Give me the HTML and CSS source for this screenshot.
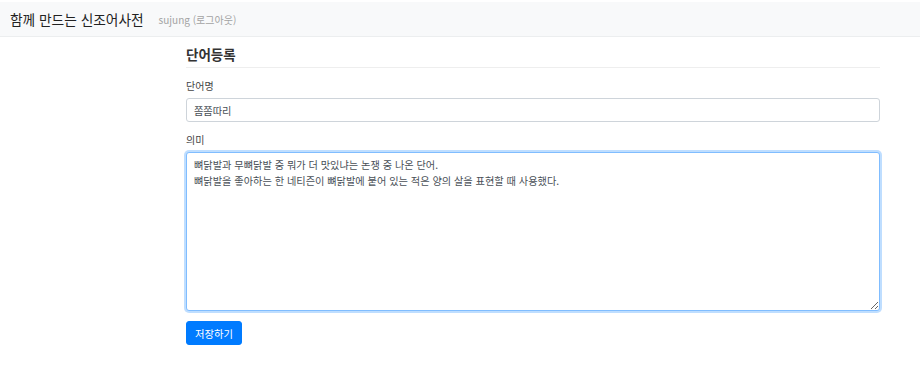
FILE: index.html
```html
<!DOCTYPE html>
<html lang="ko">
<head>
  <meta charset="UTF-8" />
  <meta name="viewport" content="width=device-width, initial-scale=1.0"/>
  <title>함께 만드는 신조어사전</title>
  <link rel="stylesheet" href="styles.css">
</head>
<body>

  <nav class="navbar">
    <span class="brand">함께 만드는 신조어사전</span>
    <span class="user">sujung (로그아웃)</span>
  </nav>

  <main class="content">
    <h5 class="title">단어등록</h5>
    <form class="word-form">
      <div class="form-group">
        <label for="word">단어명</label>
        <input type="text" id="word" class="form-control" value="쫌쫌따리">
      </div>
      <div class="form-group">
        <label for="meaning">의미</label>
        <textarea id="meaning" class="form-control focused">뼈닭발과 무뼈닭발 중 뭐가 더 맛있냐는 논쟁 중 나온 단어.
뼈닭발을 좋아하는 한 네티즌이 뼈닭발에 붙어 있는 적은 양의 살을 표현할 때 사용했다.</textarea>
      </div>
      <button type="button" class="btn-save">저장하기</button>
    </form>
  </main>

</body>
</html>
```

FILE: styles.css
```css
body {
  margin: 0;
  padding: 0;
  background: #fff;
  font-family: "Noto Sans CJK KR", "Noto Sans", sans-serif;
  font-size: 10px;
  line-height: 15px;
  color: #212529;
}

.navbar {
  margin-top: 2px;
  height: 34px;
  background: #f8f9fa;
  border-bottom: 1px solid #eceeef;
  display: flex;
  align-items: center;
  padding: 0 10px;
  gap: 15px;
}

.brand {
  font-size: 13.7px;
  color: #222;
}

.user {
  font-size: 10px;
  color: #a3a3a3;
}

.content {
  margin: 0 40px 0 186px;
}

.title {
  margin: 10px 0 10px;
  padding-bottom: 5px;
  font-size: 13.5px;
  line-height: 15px;
  font-weight: bold;
  color: #333;
  border-bottom: 1px solid #eee;
}

.form-group {
  margin-bottom: 10px;
}

.form-group label {
  display: block;
  margin-bottom: 5px;
  color: #444;
}

.form-control {
  display: block;
  box-sizing: border-box;
  width: 100%;
  margin: 0;
  padding: 4px 7px;
  font-family: inherit;
  font-size: 10.2px;
  line-height: 15px;
  color: #495057;
  background: #fff;
  border: 1px solid #ced4da;
  border-radius: 3px;
}

input.form-control {
  height: 24px;
}

textarea.form-control {
  height: 159px;
  resize: vertical;
  line-height: 16px;
  padding-top: 4px;
}

.form-control.focused {
  border-color: #80bdff;
  box-shadow: 0 0 0 2px rgba(0, 123, 255, 0.25);
  outline: none;
}

.btn-save {
  height: 24px;
  padding: 0 8px;
  font-family: inherit;
  font-size: 10.3px;
  color: #fff;
  background: #007bff;
  border: 1px solid #007bff;
  border-radius: 3px;
  cursor: pointer;
}
```
